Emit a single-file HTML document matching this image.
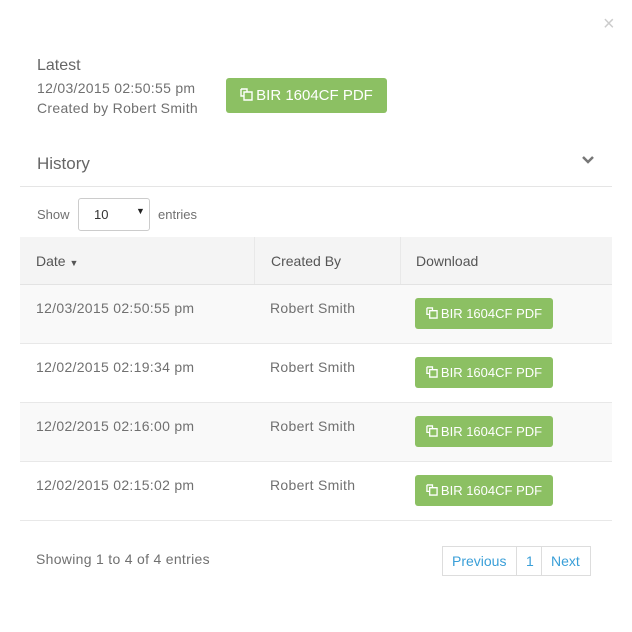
<!DOCTYPE html>
<html><head><style>
body{margin:0;width:632px;height:632px;background:#fff;font-family:"Liberation Sans",sans-serif;color:#707070;position:relative;overflow:hidden}
.a{position:absolute;white-space:nowrap}
.btn{position:absolute;background:#8cc063;color:#fff;border-radius:3px;text-align:center}
.ic{display:inline-block;vertical-align:-1px;margin-right:3px}
.row{position:absolute;left:20px;width:592px;height:58px;border-bottom:1px solid #e8e8e8}
</style></head><body>
<div class="a" style="left:603px;top:13px;font-size:20px;color:#ccc">×</div>
<div class="a" style="left:37px;top:57px;font-size:16px;color:#666">Latest</div>
<div class="a" style="left:37px;top:80px;font-size:14px;letter-spacing:0.3px">12/03/2015 02:50:55 pm</div>
<div class="a" style="left:37px;top:100px;font-size:14px;letter-spacing:0.3px">Created by Robert Smith</div>
<div class="btn" style="left:226px;top:78px;width:161px;height:35px;line-height:35px;font-size:15px"><svg class="ic" width="13" height="13" viewBox="0 0 13 13" fill="none" stroke="#fff" stroke-width="1.4"><path d="M1 1h6v3M1 1v7h3M4 4h8v8H4z"/></svg>BIR 1604CF PDF</div>
<div class="a" style="left:37px;top:154px;font-size:17px;color:#666">History</div>
<svg class="a" style="left:581px;top:155px" width="14" height="10" viewBox="0 0 14 10"><path d="M2 2l5 5 5-5" stroke="#777" stroke-width="2.5" fill="none"/></svg>
<div class="a" style="left:20px;top:186px;width:592px;border-top:1px solid #e5e5e5"></div>
<div class="a" style="left:37px;top:207px;font-size:13px">Show</div>
<div class="a" style="left:78px;top:198px;width:70px;height:31px;border:1px solid #ccc;border-radius:3px"></div>
<div class="a" style="left:94px;top:207px;font-size:13px;color:#333">10</div>
<div class="a" style="left:136px;top:206px;font-size:9px;color:#222">▼</div>
<div class="a" style="left:158px;top:207px;font-size:13px">entries</div>
<div class="a" style="left:20px;top:237px;width:592px;height:47px;background:#f4f4f4;border-bottom:1px solid #e3e3e3"></div>
<div class="a" style="left:254px;top:237px;height:47px;border-left:1px solid #e8e8e8"></div>
<div class="a" style="left:400px;top:237px;height:47px;border-left:1px solid #e8e8e8"></div>
<div class="a" style="left:36px;top:253px;font-size:14px;color:#555">Date <span style="font-size:9px">▼</span></div>
<div class="a" style="left:271px;top:253px;font-size:14px;color:#555">Created By</div>
<div class="a" style="left:416px;top:253px;font-size:14px;color:#555">Download</div>

<div class="row" style="top:285px;background:#f9f9f9"></div>
<div class="row" style="top:344px"></div>
<div class="row" style="top:403px;background:#f9f9f9"></div>
<div class="row" style="top:462px"></div>

<div class="a" style="left:36px;top:300px;font-size:14px;letter-spacing:0.3px">12/03/2015 02:50:55 pm</div>
<div class="a" style="left:270px;top:300px;font-size:14px;letter-spacing:0.3px">Robert Smith</div>
<div class="btn" style="left:415px;top:298px;width:138px;height:31px;line-height:31px;font-size:13px"><svg class="ic" width="12" height="12" viewBox="0 0 13 13" fill="none" stroke="#fff" stroke-width="1.4"><path d="M1 1h6v3M1 1v7h3M4 4h8v8H4z"/></svg>BIR 1604CF PDF</div>

<div class="a" style="left:36px;top:359px;font-size:14px;letter-spacing:0.3px">12/02/2015 02:19:34 pm</div>
<div class="a" style="left:270px;top:359px;font-size:14px;letter-spacing:0.3px">Robert Smith</div>
<div class="btn" style="left:415px;top:357px;width:138px;height:31px;line-height:31px;font-size:13px"><svg class="ic" width="12" height="12" viewBox="0 0 13 13" fill="none" stroke="#fff" stroke-width="1.4"><path d="M1 1h6v3M1 1v7h3M4 4h8v8H4z"/></svg>BIR 1604CF PDF</div>

<div class="a" style="left:36px;top:418px;font-size:14px;letter-spacing:0.3px">12/02/2015 02:16:00 pm</div>
<div class="a" style="left:270px;top:418px;font-size:14px;letter-spacing:0.3px">Robert Smith</div>
<div class="btn" style="left:415px;top:416px;width:138px;height:31px;line-height:31px;font-size:13px"><svg class="ic" width="12" height="12" viewBox="0 0 13 13" fill="none" stroke="#fff" stroke-width="1.4"><path d="M1 1h6v3M1 1v7h3M4 4h8v8H4z"/></svg>BIR 1604CF PDF</div>

<div class="a" style="left:36px;top:477px;font-size:14px;letter-spacing:0.3px">12/02/2015 02:15:02 pm</div>
<div class="a" style="left:270px;top:477px;font-size:14px;letter-spacing:0.3px">Robert Smith</div>
<div class="btn" style="left:415px;top:475px;width:138px;height:31px;line-height:31px;font-size:13px"><svg class="ic" width="12" height="12" viewBox="0 0 13 13" fill="none" stroke="#fff" stroke-width="1.4"><path d="M1 1h6v3M1 1v7h3M4 4h8v8H4z"/></svg>BIR 1604CF PDF</div>

<div class="a" style="left:36px;top:551px;font-size:14px;letter-spacing:0.3px">Showing 1 to 4 of 4 entries</div>
<div class="a" style="left:442px;top:546px;width:147px;height:28px;border:1px solid #ddd;font-size:14px;color:#3a9fd8;line-height:29px">
<span style="position:absolute;left:9px">Previous</span>
<span style="position:absolute;left:73px;top:0;height:28px;border-left:1px solid #ddd"></span>
<span style="position:absolute;left:83px">1</span>
<span style="position:absolute;left:98px;top:0;height:28px;border-left:1px solid #ddd"></span>
<span style="position:absolute;left:108px">Next</span>
</div>
</body></html>
